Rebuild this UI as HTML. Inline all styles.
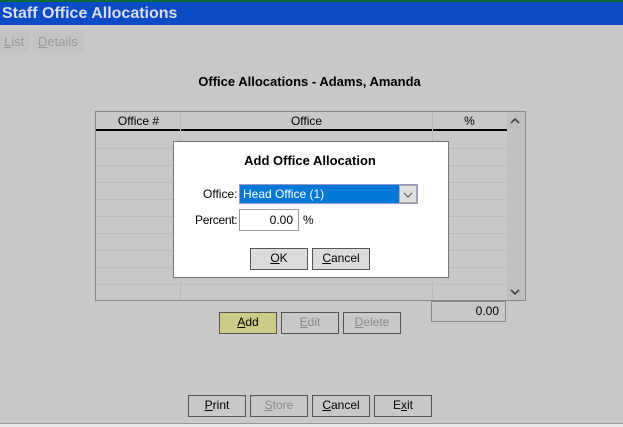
<!DOCTYPE html>
<html><head><style>
*{box-sizing:border-box;margin:0;padding:0}
body{width:623px;height:427px;background:#c8c8c8;font-family:"Liberation Sans",sans-serif;font-size:12px;position:relative;overflow:hidden;color:#000}
.a{position:absolute}
.btn{position:absolute;border:1px solid #555;background:#c8c8c8;text-align:center;line-height:19px;font-size:12px}
u{text-decoration:underline}
</style></head><body>
<div class="a" style="left:0;top:0;width:623px;height:2px;background:#0a6a3a"></div>
<div class="a" style="left:0;top:2px;width:623px;height:23px;background:#0b4cc6;color:#d8dce8;font-weight:bold;font-size:16px;line-height:23px;padding-left:2px">Staff Office Allocations</div>
<div class="a" style="left:0;top:30px;width:29px;height:23px;background:#c3c3c3;color:#999;line-height:23px;padding-left:4px;font-size:13px"><u>L</u>ist</div>
<div class="a" style="left:33px;top:30px;width:51px;height:23px;background:#c3c3c3;color:#999;line-height:23px;padding-left:5px;font-size:13px"><u>D</u>etails</div>
<div class="a" style="left:-2px;top:74px;width:623px;text-align:center;font-weight:bold;font-size:13px">Office Allocations - Adams, Amanda</div>
<div class="a" style="left:95px;top:111px;width:431px;height:190px;border:1px solid #888;background:#c8c8c8">
 <div class="a" style="left:0;top:0;width:411px;height:19px;border-bottom:2px solid #000"></div>
 <div class="a" style="left:0;top:2px;width:85px;text-align:center">Office #</div>
 <div class="a" style="left:85px;top:2px;width:251px;text-align:center">Office</div>
 <div class="a" style="left:336px;top:2px;width:75px;text-align:center">%</div>
 <div class="a" style="left:84px;top:0;width:1px;height:188px;background:#bbb"></div>
 <div class="a" style="left:336px;top:0;width:1px;height:188px;background:#bbb"></div>
 <div class="a" style="left:411px;top:0;width:18px;height:188px;background:#c0c0c0"></div>
 <svg class="a" style="left:414px;top:6px" width="10" height="6"><path d="M1 5L5 1L9 5" stroke="#444" stroke-width="1.6" fill="none"/></svg>
 <svg class="a" style="left:414px;top:177px" width="10" height="6"><path d="M1 1L5 5L9 1" stroke="#444" stroke-width="1.6" fill="none"/></svg>
 <div class="a" style="left:0;top:36px;width:411px;height:1px;background:#bdbdbd"></div>
 <div class="a" style="left:0;top:53px;width:411px;height:1px;background:#bdbdbd"></div>
 <div class="a" style="left:0;top:70px;width:411px;height:1px;background:#bdbdbd"></div>
 <div class="a" style="left:0;top:87px;width:411px;height:1px;background:#bdbdbd"></div>
 <div class="a" style="left:0;top:104px;width:411px;height:1px;background:#bdbdbd"></div>
 <div class="a" style="left:0;top:121px;width:411px;height:1px;background:#bdbdbd"></div>
 <div class="a" style="left:0;top:138px;width:411px;height:1px;background:#bdbdbd"></div>
 <div class="a" style="left:0;top:155px;width:411px;height:1px;background:#bdbdbd"></div>
 <div class="a" style="left:0;top:172px;width:411px;height:1px;background:#bdbdbd"></div>
</div>
<div class="a" style="left:431px;top:301px;width:75px;height:21px;border:1px solid #888;text-align:right;padding-right:6px;line-height:19px">0.00</div>
<div class="btn" style="left:219px;top:312px;width:58px;height:22px;background:#cccc88"><u>A</u>dd</div>
<div class="btn" style="left:281px;top:312px;width:58px;height:22px;color:#888"><u>E</u>dit</div>
<div class="btn" style="left:343px;top:312px;width:58px;height:22px;color:#888"><u>D</u>elete</div>
<div class="a" style="left:173px;top:141px;width:276px;height:137px;background:#fff;border:1px solid #777">
 <div class="a" style="left:-1px;top:11px;width:274px;text-align:center;font-weight:bold;font-size:13px">Add Office Allocation</div>
 <div class="a" style="left:29px;top:45px">Office:</div>
 <div class="a" style="left:65px;top:42px;width:179px;height:20px;background:#0078d7;border:1px solid #99c;color:#fff;padding-left:3px;line-height:18px">Head Office (1)</div>
 <div class="a" style="left:225px;top:43px;width:18px;height:18px;background:#e0e0e0;border:1px solid #aaa"></div>
 <svg class="a" style="left:229px;top:50px" width="10" height="6"><path d="M1 1L5 5L9 1" stroke="#555" stroke-width="1" fill="none"/></svg>
 <div class="a" style="left:21px;top:71px;letter-spacing:-0.3px">Percent:</div>
 <div class="a" style="left:65px;top:67px;width:60px;height:22px;border:1px solid #999;text-align:right;padding-right:5px;line-height:20px">0.00</div>
 <div class="a" style="left:129px;top:71px">%</div>
 <div class="btn" style="left:76px;top:106px;width:58px;height:22px;background:#dcdcdc"><u>O</u>K</div>
 <div class="btn" style="left:138px;top:106px;width:58px;height:22px;background:#dcdcdc"><u>C</u>ancel</div>
</div>
<div class="btn" style="left:188px;top:395px;width:58px;height:22px"><u>P</u>rint</div>
<div class="btn" style="left:250px;top:395px;width:58px;height:22px;color:#888"><u>S</u>tore</div>
<div class="btn" style="left:312px;top:395px;width:58px;height:22px"><u>C</u>ancel</div>
<div class="btn" style="left:374px;top:395px;width:58px;height:22px">E<u>x</u>it</div>
<div class="a" style="left:0;top:423px;width:623px;height:4px;background:#e8e8e8;border-top:1px solid #999"></div>
</body></html>
